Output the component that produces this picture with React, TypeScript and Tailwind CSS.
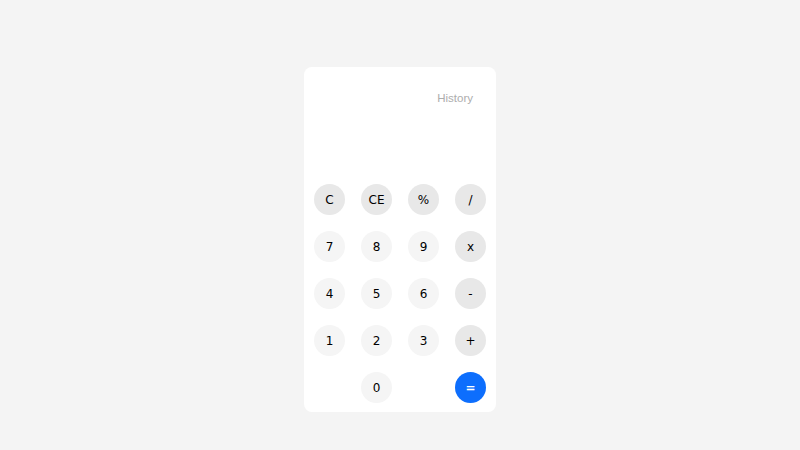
import React from "react";

type Btn = { label: string; kind: "op" | "num" | "eq" | "empty" };

const rows: Btn[][] = [
  [
    { label: "C", kind: "op" },
    { label: "CE", kind: "op" },
    { label: "%", kind: "op" },
    { label: "/", kind: "op" },
  ],
  [
    { label: "7", kind: "num" },
    { label: "8", kind: "num" },
    { label: "9", kind: "num" },
    { label: "x", kind: "op" },
  ],
  [
    { label: "4", kind: "num" },
    { label: "5", kind: "num" },
    { label: "6", kind: "num" },
    { label: "-", kind: "op" },
  ],
  [
    { label: "1", kind: "num" },
    { label: "2", kind: "num" },
    { label: "3", kind: "num" },
    { label: "+", kind: "op" },
  ],
  [
    { label: "", kind: "empty" },
    { label: "0", kind: "num" },
    { label: "", kind: "empty" },
    { label: "=", kind: "eq" },
  ],
];

export default function App() {
  return (
    <div className="w-full h-[450px] bg-[#f4f4f4] flex justify-center pt-[67px]">
      <div className="w-[192px] h-[345px] bg-white rounded-[8px] flex flex-col">
        <div className="flex-1 flex justify-end items-start pt-[23px] pr-[23px]">
          <span
            className="text-[11.5px] text-[#adadad]"
            style={{ fontFamily: '"Liberation Sans", Arial, sans-serif' }}
          >
            History
          </span>
        </div>
        <div
          className="grid grid-cols-4 gap-4 px-[10px] pb-[9px]"
          style={{ fontFamily: '"DejaVu Sans", sans-serif' }}
        >
          {rows.flat().map((b, i) =>
            b.kind === "empty" ? (
              <div key={i} className="w-[31px] h-[31px]" />
            ) : (
              <button
                key={i}
                className={
                  "w-[31px] h-[31px] rounded-full flex items-center justify-center text-[12px] leading-none pt-[1px] " +
                  (b.kind === "op"
                    ? "bg-[#e8e8e8] text-black"
                    : b.kind === "num"
                    ? "bg-[#f5f5f5] text-black"
                    : "bg-[#0d6efd] text-white font-bold")
                }
              >
                {b.label}
              </button>
            )
          )}
        </div>
      </div>
    </div>
  );
}
